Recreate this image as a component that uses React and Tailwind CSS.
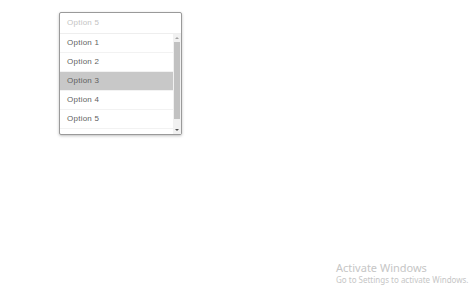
import { useState } from 'react'

const options = ['Option 1', 'Option 2', 'Option 3', 'Option 4', 'Option 5']

export default function App() {
  const [selected] = useState('Option 5')
  const [hovered, setHovered] = useState('Option 3')

  return (
    <div className="relative h-[287px] w-[474px] overflow-hidden bg-white pl-[59px] pt-[12px]" style={{ fontFamily: '"Liberation Sans", Arial, sans-serif' }}>
      <div className="w-[123px] rounded-[2px] border border-[#9a9a9a] bg-white shadow-[0_1px_3px_rgba(0,0,0,0.25)]">
        <div className="flex h-[21px] items-center border-b border-[#eeeeee] px-[7px] text-[8px] tracking-[0.25px] text-[#c4c4c4]">{selected}</div>
        <div className="flex h-[100px]">
          <ul className="flex-1 overflow-hidden">
            {options.map(o => (
              <li
                key={o}
                onMouseEnter={() => setHovered(o)}
                className={`flex h-[19px] items-center border-b border-[#f2f2f2] px-[7px] text-[8px] tracking-[0.25px] text-[#5f5f5f] ${hovered === o ? 'bg-[#c8c8c8]' : ''}`}
              >
                {o}
              </li>
            ))}
          </ul>
          <div className="flex w-[8px] flex-col items-center bg-[#f1f1f1] py-[1px]">
            <div className="flex h-[6px] items-center justify-center">
              <div className="h-0 w-0 border-x-[2px] border-b-[2px] border-x-transparent border-b-[#a3a3a3]" />
            </div>
            <div className="mb-[8px] mt-[1px] w-[6px] flex-1 bg-[#c1c1c1]" />
            <div className="flex h-[6px] items-center justify-center">
              <div className="h-0 w-0 border-x-[2px] border-t-[2px] border-x-transparent border-t-[#505050]" />
            </div>
          </div>
        </div>
      </div>

      <div className="absolute left-[336px] top-[261px] text-[#c6c6c6]" style={{ fontFamily: '"Noto Sans", "Open Sans", sans-serif' }}>
        <div className="text-[11px] leading-[13px]">Activate Windows</div>
        <div className="text-[8px] leading-[12px]">Go to Settings to activate Windows.</div>
      </div>
    </div>
  )
}
